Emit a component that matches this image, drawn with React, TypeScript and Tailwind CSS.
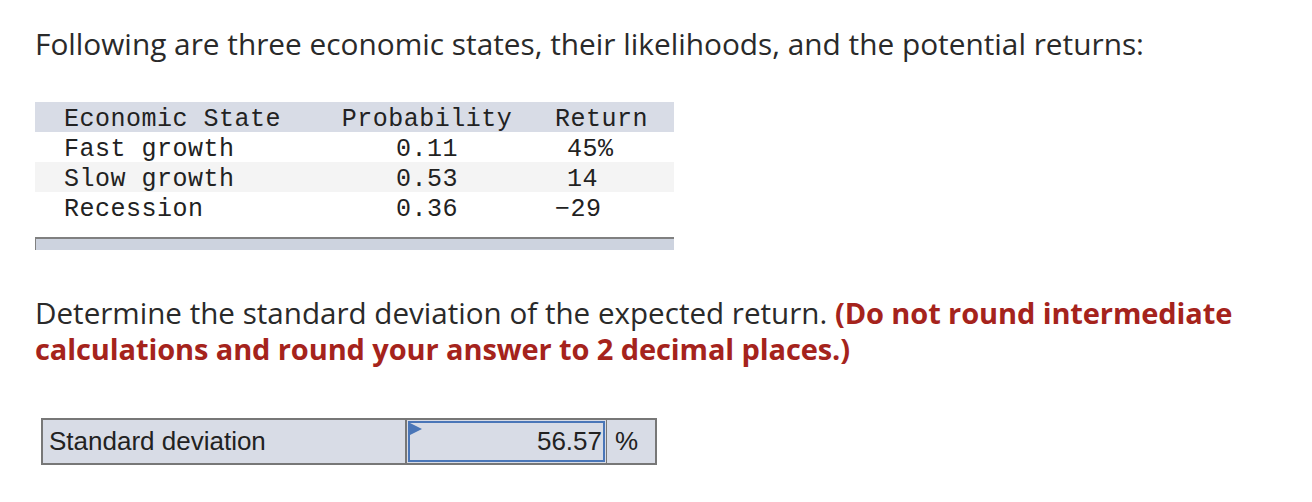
export default function App() {
  const rows = [
    { state: "Fast growth", p: "0.11", r: "45", pct: true, shade: false },
    { state: "Slow growth", p: "0.53", r: "14", pct: false, shade: true },
    { state: "Recession", p: "0.36", r: "\u221229", pct: false, shade: false },
  ];
  const sans = { fontFamily: '"Open Sans", Lato, sans-serif' };
  return (
    <div className="w-[1312px] h-[502px] bg-white text-[#2b2b2b] pl-[35px] pt-[26px] overflow-hidden">
      <p className="text-[29.8px] leading-[36px] text-[#2a2a2a]" style={sans}>
        Following are three economic states, their likelihoods, and the potential returns:
      </p>

      <div className="mt-[40px] w-[639px] font-['Liberation_Mono',monospace] text-[25px] tracking-[0.5px] text-[#222]">
        <div className="flex h-[30px] items-center bg-[#d8dce6] pt-[6px]">
          <div className="w-[264px] pl-[29px]">Economic State</div>
          <div className="w-[256px] text-center">Probability</div>
          <div className="flex-1 pl-0">Return</div>
        </div>
        {rows.map((row) => (
          <div
            key={row.state}
            className={`flex h-[30px] items-center pt-[6px] ${row.shade ? "bg-[#f4f4f4]" : "bg-white"}`}
          >
            <div className="w-[264px] pl-[29px]">{row.state}</div>
            <div className="w-[256px] text-center">{row.p}</div>
            <div className="flex">
              <span className="w-[43px] text-right">{row.r}</span>
              <span className="w-[16px]">{row.pct ? "%" : ""}</span>
            </div>
          </div>
        ))}
        <div className="mt-[15px] h-[13px] border-t-2 border-l border-[#808080] bg-[#cdd3df]" />
      </div>

      <div className="mt-[45px] text-[29.6px] leading-[36px]" style={sans}>
        <span className="text-[#2a2a2a]">Determine the standard deviation of the expected return. </span>
        <span className="text-[29px] font-bold tracking-[-0.1px] text-[#a5231c]">
          (Do not round intermediate calculations and round your answer to 2 decimal places.)
        </span>
      </div>

      <div className="mt-[51px] ml-[6px] flex h-[47px] w-[616px] border-2 border-[#777] bg-[#d8dce6] font-['Liberation_Sans',Arial,sans-serif] text-[26px] text-[#222]">
        <div className="flex w-[364px] items-center border-r-2 border-[#777] pl-[6px]">Standard deviation</div>
        <div className="relative m-[1px] flex w-[197px] items-center justify-end border-2 border-[#4a76b8] pr-[1px]">
          <span className="absolute left-0 top-0 h-0 w-0 border-y-[6px] border-l-[12px] border-y-transparent border-l-[#4a76b8]" />
          56.57
        </div>
        <div className="flex flex-1 items-center border-l border-[#777] pl-[8px]">%</div>
      </div>
    </div>
  );
}
